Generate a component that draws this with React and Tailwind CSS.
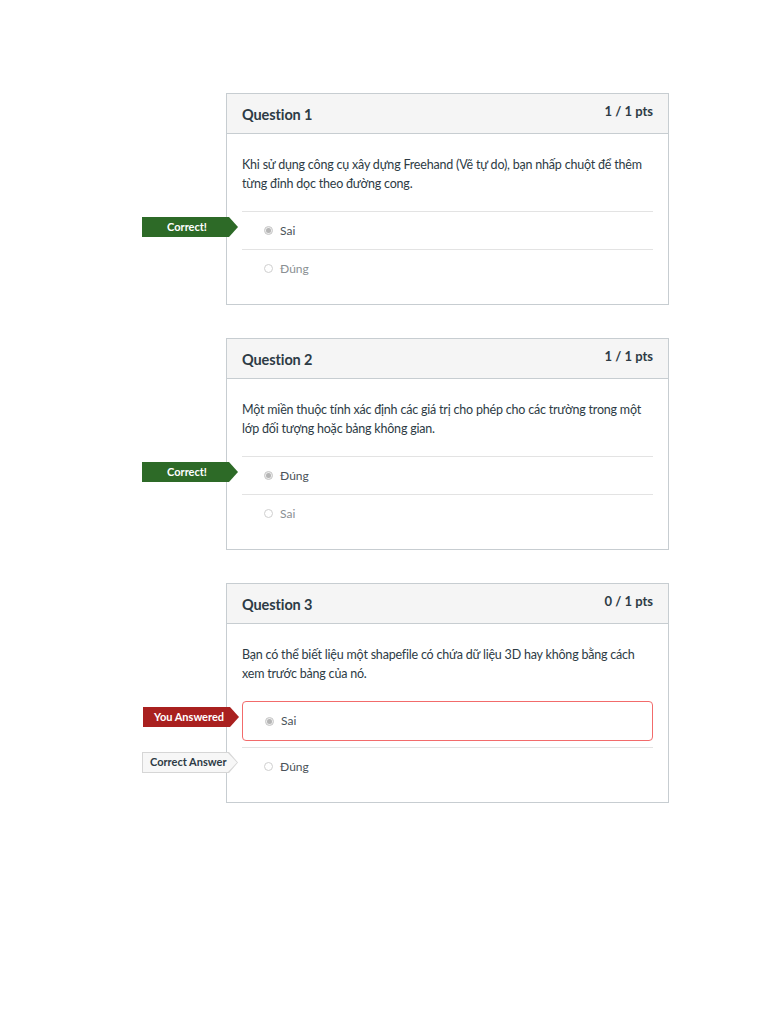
const questions = [
  {
    title: "Question 1",
    pts: "1 / 1 pts",
    text: "Khi sử dụng công cụ xây dựng Freehand (Vẽ tự do), bạn nhấp chuột để thêm từng đỉnh dọc theo đường cong.",
    options: [
      { label: "Sai", selected: true, badge: "correct" },
      { label: "Đúng" },
    ],
  },
  {
    title: "Question 2",
    pts: "1 / 1 pts",
    text: "Một miền thuộc tính xác định các giá trị cho phép cho các trường trong một lớp đối tượng hoặc bảng không gian.",
    options: [
      { label: "Đúng", selected: true, badge: "correct" },
      { label: "Sai" },
    ],
  },
  {
    title: "Question 3",
    pts: "0 / 1 pts",
    text: "Bạn có thể biết liệu một shapefile có chứa dữ liệu 3D hay không bằng cách xem trước bảng của nó.",
    wrong: true,
    options: [
      { label: "Sai", selected: true, badge: "answered" },
      { label: "Đúng", badge: "answer", dark: true },
    ],
  },
];

const arrow =
  "[clip-path:polygon(0_0,calc(100%_-_9px)_0,100%_50%,calc(100%_-_9px)_100%,0_100%)]";

function Badge({ kind }) {
  if (kind === "answer") {
    return (
      <div className={`absolute left-[-100px] top-[4px] h-[21px] w-[96px] bg-[#d6d6d6] ${arrow}`}>
        <div
          className={`absolute inset-[1px] flex items-center pl-[7px] bg-[#f7f7f7] text-[11px] font-bold text-[#2d3b45] ${arrow}`}
        >
          Correct Answer
        </div>
      </div>
    );
  }
  const green = kind === "correct";
  return (
    <div
      className={`absolute left-[-100px] top-[5px] flex h-[20px] w-[96px] items-center text-[11px] font-bold text-white ${arrow} ${
        green ? "justify-center pr-[6px] bg-[#2d6a27]" : "pl-[11px] bg-[#a9201f]"
      }`}
    >
      {green ? "Correct!" : "You Answered"}
    </div>
  );
}

function Radio({ selected }) {
  return selected ? (
    <span className="flex h-[9px] w-[9px] items-center justify-center rounded-full border border-[#c8c8c8] bg-[#ececec]">
      <span className="h-[5px] w-[5px] rounded-full bg-[#b5b5b5]" />
    </span>
  ) : (
    <span className="h-[9px] w-[9px] rounded-full border border-[#cfcfcf] bg-white" />
  );
}

function Option({ opt, boxed }) {
  const dark = opt.selected || opt.dark;
  return (
    <div
      className={`relative flex items-center gap-[7px] pl-[22px] ${
        boxed
          ? "h-[40px] rounded-[4px] border border-[#f26b6b] mb-[6px]"
          : "h-[38px] border-t border-[#e3e3e3]"
      }`}
    >
      {opt.badge && <Badge kind={opt.badge} />}
      <Radio selected={opt.selected} />
      <span className={`text-[12px] ${dark ? "text-[#4a5259]" : "text-[#8a8f93]"}`}>{opt.label}</span>
    </div>
  );
}

function QuestionCard({ q }) {
  return (
    <div className="relative w-[443px] border border-[#c7cdd1] bg-white">
      <div className="flex h-[40px] items-start justify-between border-b border-[#c7cdd1] bg-[#f5f5f5] px-[15px]">
        <span className="pt-[10px] text-[14.5px] font-bold tracking-[-0.1px] text-[#2d3b45]">{q.title}</span>
        <span className="pt-[8px] text-[13px] font-bold text-[#2d3b45]">{q.pts}</span>
      </div>
      <div className="px-[15px] pb-[17px] pt-[21px]">
        <p className="mb-[18px] text-[12.5px] leading-[19px] tracking-[-0.2px] text-[#2d3b45]">{q.text}</p>
        {q.options.map((opt, i) => (
          <Option key={i} opt={opt} boxed={q.wrong && i === 0} />
        ))}
      </div>
    </div>
  );
}

export default function App() {
  return (
    <div
      className="min-h-[1024px] w-[768px] bg-white pl-[226px] pt-[93px]"
      style={{ fontFamily: "Lato, 'Noto Sans', sans-serif" }}
    >
      <div className="flex flex-col gap-[33px]">
        {questions.map((q) => (
          <QuestionCard key={q.title} q={q} />
        ))}
      </div>
    </div>
  );
}
